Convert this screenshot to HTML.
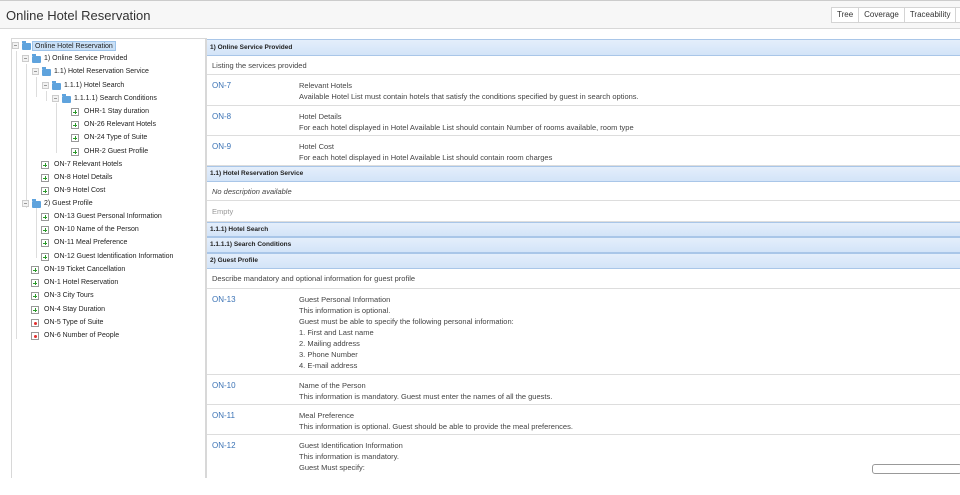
<!DOCTYPE html>
<html><head><style>
*{margin:0;padding:0;box-sizing:border-box}
body{width:960px;height:470px;overflow:hidden;background:#fff;font-family:"Liberation Sans",Arial,sans-serif;position:relative}
.top{position:absolute;left:0;top:0;width:960px;height:29px;background:#f7f7f7;border-bottom:1px solid #d8d8d8;border-top:1px solid #ccc}
.top h1{position:absolute;left:6px;top:7px;font-size:13px;font-weight:normal;color:#333}
.btns{position:absolute;left:832px;top:6px;display:flex}
.btns span{border:1px solid #d4d4d4;background:#fff;font-size:8px;color:#333;height:16px;line-height:14px;padding:0 5px;margin-left:-1px}
.left{position:absolute;left:11px;top:38px;width:195px;height:440px;border:1px solid #d8d8d8;border-bottom:none}
.tn{position:absolute;font-size:7px;color:#222;white-space:nowrap;height:10px;line-height:10px}
.tg{position:absolute;width:7px;height:7px;border:1px solid #ccc;background:#f2f2f2}
.tg:after{content:"";position:absolute;left:1px;top:2px;width:3px;height:1px;background:#999}
.fd{position:absolute;width:9px;height:7px;background:#5fa3dd;border-radius:1px}
.fd:before{content:"";position:absolute;left:0;top:-2px;width:4px;height:2px;background:#5fa3dd}
.lf{position:absolute;width:8px;height:8px;border:1px solid #999;background:#fff}
.lf.g:before{content:"";position:absolute;left:1px;top:2.5px;width:4px;height:1.2px;background:#2a9a2a}
.lf.g:after{content:"";position:absolute;left:2.5px;top:1px;width:1.2px;height:4px;background:#2a9a2a}
.lf.rd:before{content:"";position:absolute;left:1.5px;top:1.5px;width:3px;height:3px;border-radius:50%;background:#e03030}
.vl{position:absolute;border-left:1px solid #ddd}
.sel{background:#c9e0f7;border:1px solid #9cc3ea;padding:0 2px}
.right{position:absolute;left:206px;top:38px;width:760px;height:440px;border-left:1px solid #d8d8d8}
.h{position:absolute;left:0;width:760px;background:linear-gradient(#e4eefb,#d3e4f8);border-top:1px solid #a9c6e8;border-bottom:1px solid #a9c6e8;font-size:6.5px;font-weight:bold;color:#222;padding-left:3px}
.r{position:absolute;left:0;width:760px;border-bottom:1px solid #ddd;font-size:7.5px;color:#444;line-height:11px}
.id{position:absolute;left:5px;top:5px;color:#3a72b5;font-size:8px}
.d{position:absolute;left:92px;top:5px;font-size:7.5px;color:#444}
</style></head><body>
<div class="top"><h1>Online Hotel Reservation</h1>
<div class="btns"><span>Tree</span><span>Coverage</span><span>Traceability</span><span style="width:20px"></span></div></div>

<div class="left">
<div class="vl" style="left:4px;top:12px;height:288px"></div>
<div class="vl" style="left:14px;top:25px;height:144px"></div>
<div class="vl" style="left:24px;top:38px;height:20px"></div>
<div class="vl" style="left:34px;top:52px;height:10px"></div>
<div class="vl" style="left:44px;top:64px;height:50px"></div>
<div class="vl" style="left:24px;top:169px;height:50px"></div>
</div>
<div class="right">
<div class="h" style="top:1px;height:17px;line-height:15px">1) Online Service Provided</div>
<div class="r" style="top:18px;height:19px;padding:4px 5px">Listing the services provided</div>
<div class="r" style="top:37px;height:31px"><span class="id">ON-7</span><div class="d">Relevant Hotels<br>Available Hotel List must contain hotels that satisfy the conditions specified by guest in search options.</div></div>
<div class="r" style="top:68px;height:30px"><span class="id">ON-8</span><div class="d">Hotel Details<br>For each hotel displayed in Hotel Available List should contain Number of rooms available, room type</div></div>
<div class="r" style="top:98px;height:30px"><span class="id">ON-9</span><div class="d">Hotel Cost<br>For each hotel displayed in Hotel Available List should contain room charges</div></div>
<div class="h" style="top:128px;height:16px;line-height:14px">1.1) Hotel Reservation Service</div>
<div class="r" style="top:144px;height:19px;padding:4px 5px;font-style:italic">No description available</div>
<div class="r" style="top:163px;height:21px;padding:5px 5px;color:#999">Empty</div>
<div class="h" style="top:184px;height:15px;line-height:13px">1.1.1) Hotel Search</div>
<div class="h" style="top:199px;height:16px;line-height:14px">1.1.1.1) Search Conditions</div>
<div class="h" style="top:215px;height:16px;line-height:14px">2) Guest Profile</div>
<div class="r" style="top:231px;height:20px;padding:4px 5px">Describe mandatory and optional information for guest profile</div>
<div class="r" style="top:251px;height:86px"><span class="id">ON-13</span><div class="d">Guest Personal Information<br>This information is optional.<br>Guest must be able to specify the following personal information:<br>1. First and Last name<br>2. Mailing address<br>3. Phone Number<br>4. E-mail address</div></div>
<div class="r" style="top:337px;height:30px"><span class="id">ON-10</span><div class="d">Name of the Person<br>This information is mandatory. Guest must enter the names of all the guests.</div></div>
<div class="r" style="top:367px;height:30px"><span class="id">ON-11</span><div class="d">Meal Preference<br>This information is optional. Guest should be able to provide the meal preferences.</div></div>
<div class="r" style="top:397px;height:60px;border:none"><span class="id">ON-12</span><div class="d">Guest Identification Information<br>This information is mandatory.<br>Guest Must specify:</div></div>
</div>
<div style="position:absolute;left:872px;top:464px;width:90px;height:10px;border:1px solid #999;border-radius:3px;background:#fff"></div>

<div class="tg" style="left:12px;top:42px"></div><div class="fd" style="left:22px;top:43px"></div><span class="tn sel" style="left:32px;top:41px">Online Hotel Reservation</span>
<div class="tg" style="left:22px;top:55px"></div><div class="fd" style="left:32px;top:56px"></div><span class="tn" style="left:44px;top:54px">1) Online Service Provided</span>
<div class="tg" style="left:32px;top:68px"></div><div class="fd" style="left:42px;top:69px"></div><span class="tn" style="left:54px;top:67px">1.1) Hotel Reservation Service</span>
<div class="tg" style="left:42px;top:82px"></div><div class="fd" style="left:52px;top:83px"></div><span class="tn" style="left:64px;top:81px">1.1.1) Hotel Search</span>
<div class="tg" style="left:52px;top:95px"></div><div class="fd" style="left:62px;top:96px"></div><span class="tn" style="left:74px;top:94px">1.1.1.1) Search Conditions</span>
<div class="lf g" style="left:71px;top:108px"></div><span class="tn" style="left:84px;top:107px">OHR-1 Stay duration</span>
<div class="lf g" style="left:71px;top:121px"></div><span class="tn" style="left:84px;top:120px">ON-26 Relevant Hotels</span>
<div class="lf g" style="left:71px;top:134px"></div><span class="tn" style="left:84px;top:133px">ON-24 Type of Suite</span>
<div class="lf g" style="left:71px;top:148px"></div><span class="tn" style="left:84px;top:147px">OHR-2 Guest Profile</span>
<div class="lf g" style="left:41px;top:161px"></div><span class="tn" style="left:54px;top:160px">ON-7 Relevant Hotels</span>
<div class="lf g" style="left:41px;top:174px"></div><span class="tn" style="left:54px;top:173px">ON-8 Hotel Details</span>
<div class="lf g" style="left:41px;top:187px"></div><span class="tn" style="left:54px;top:186px">ON-9 Hotel Cost</span>
<div class="tg" style="left:22px;top:200px"></div><div class="fd" style="left:32px;top:201px"></div><span class="tn" style="left:44px;top:199px">2) Guest Profile</span>
<div class="lf g" style="left:41px;top:213px"></div><span class="tn" style="left:54px;top:212px">ON-13 Guest Personal Information</span>
<div class="lf g" style="left:41px;top:226px"></div><span class="tn" style="left:54px;top:225px">ON-10 Name of the Person</span>
<div class="lf g" style="left:41px;top:239px"></div><span class="tn" style="left:54px;top:238px">ON-11 Meal Preference</span>
<div class="lf g" style="left:41px;top:253px"></div><span class="tn" style="left:54px;top:252px">ON-12 Guest Identification Information</span>
<div class="lf g" style="left:31px;top:266px"></div><span class="tn" style="left:44px;top:265px">ON-19 Ticket Cancellation</span>
<div class="lf g" style="left:31px;top:279px"></div><span class="tn" style="left:44px;top:278px">ON-1 Hotel Reservation</span>
<div class="lf g" style="left:31px;top:292px"></div><span class="tn" style="left:44px;top:291px">ON-3 City Tours</span>
<div class="lf g" style="left:31px;top:306px"></div><span class="tn" style="left:44px;top:305px">ON-4 Stay Duration</span>
<div class="lf rd" style="left:31px;top:319px"></div><span class="tn" style="left:44px;top:318px">ON-5 Type of Suite</span>
<div class="lf rd" style="left:31px;top:332px"></div><span class="tn" style="left:44px;top:331px">ON-6 Number of People</span>
</body></html>
